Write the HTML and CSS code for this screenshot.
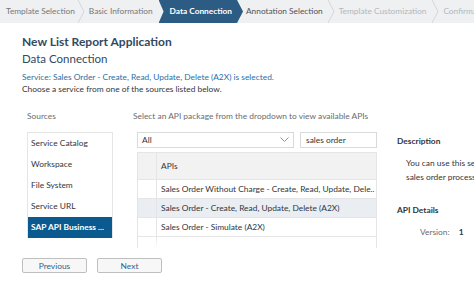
FILE: index.html
```html
<!DOCTYPE html>
<html>
<head>
<meta charset="utf-8">
<link rel="stylesheet" href="styles.css">
</head>
<body>
<nav class="crumbs">
  <div class="crumb first">Template Selection</div>
  <svg class="sep" width="8" height="23" viewBox="0 0 8 23"><path d="M1 0 L7 11.5 L1 23" fill="none" stroke="#d3d7db" stroke-width="1"/></svg>
  <div class="crumb second">Basic Information</div>
  <div class="crumb active">Data Connection</div>
  <div class="crumb next">Annotation Selection</div>
  <svg class="sep" width="8" height="23" viewBox="0 0 8 23"><path d="M1 0 L7 11.5 L1 23" fill="none" stroke="#d3d7db" stroke-width="1"/></svg>
  <div class="crumb disabled">Template Customization</div>
  <svg class="sep" width="8" height="23" viewBox="0 0 8 23"><path d="M1 0 L7 11.5 L1 23" fill="none" stroke="#d3d7db" stroke-width="1"/></svg>
  <div class="crumb disabled">Confirmation</div>
</nav>
<main class="content">
  <h1 class="title">New List Report Application</h1>
  <h2 class="subtitle">Data Connection</h2>
  <p class="info">Service: Sales Order - Create, Read, Update, Delete (A2X) is selected.</p>
  <p class="hint">Choose a service from one of the sources listed below.</p>
  <section class="panes">
    <div class="sources">
      <div class="label">Sources</div>
      <ul class="list">
        <li>Service Catalog</li>
        <li>Workspace</li>
        <li>File System</li>
        <li>Service URL</li>
        <li class="selected">SAP API Business ...</li>
      </ul>
    </div>
    <div class="apis">
      <div class="label">Select an API package from the dropdown to view available APIs</div>
      <div class="filters">
        <div class="select"><span>All</span>
          <svg width="9" height="6" viewBox="0 0 9 6"><path d="M0.5 0.5 L4.5 4.5 L8.5 0.5" fill="none" stroke="#8c9196" stroke-width="1"/></svg>
        </div>
        <div class="search">sales order</div>
      </div>
      <div class="table">
        <div class="row head"><div class="sel"></div><div class="cell">APIs</div></div>
        <div class="row"><div class="sel"></div><div class="cell">Sales Order Without Charge - Create, Read, Update, Dele..</div></div>
        <div class="row hl"><div class="sel"></div><div class="cell">Sales Order - Create, Read, Update, Delete (A2X)</div></div>
        <div class="row"><div class="sel"></div><div class="cell">Sales Order - Simulate (A2X)</div></div>
        <div class="row tail"><div class="sel"></div><div class="cell"></div></div>
        <div class="fade"></div>
      </div>
    </div>
    <div class="desc">
      <div class="dtitle">Description</div>
      <p class="dtext">You can use this service to create, read, update, and delete<br>sales order processes in your system.</p>
      <div class="dtitle api">API Details</div>
      <div class="version"><span class="vk">Version:</span><span class="vv">1</span></div>
    </div>
  </section>
  <footer class="buttons">
    <button class="btn">Previous</button>
    <button class="btn">Next</button>
  </footer>
</main>
</body>
</html>
```
FILE: styles.css
```css
* { box-sizing: border-box; }
html, body { margin: 0; padding: 0; }
body {
  width: 474px; height: 281px; overflow: hidden;
  font-family: "Lato", "Liberation Sans", sans-serif;
  color: #32363a;
  background: #fff;
}
.crumbs {
  display: flex; align-items: center;
  height: 23px; background: #eef0f2;
  white-space: nowrap; overflow: hidden;
  font-size: 8.3px;
}
.crumb { height: 23px; line-height: 23px; flex: none; }
.sep { flex: none; }
.crumb.first { color: #73787d; padding: 0 2px 0 6px; }
.crumb.second { color: #73787d; padding: 0 6px 0 4px; }
.crumb.active {
  background: #2c5b83; color: #fff; font-weight: 700;
  padding: 0 11px 0 11px;
  clip-path: polygon(0 0, calc(100% - 6px) 0, 100% 50%, calc(100% - 6px) 100%, 0 100%, 5px 50%);
}
.crumb.next { color: #4f5357; padding: 0 4px 0 3px; }
.crumb.disabled { color: #b2b8be; padding: 0 5px 0 4px; }

.content { padding: 10px 0 0 22px; }
.title { margin: 0; font-size: 12px; font-weight: 700; color: #304a62; line-height: 17px; }
.subtitle { margin: 0; font-size: 11.5px; font-weight: 400; color: #304a62; line-height: 17px; }
.info { margin: 4px 0 0; font-size: 8.4px; color: #2d6fa5; line-height: 12px; }
.hint { margin: 0; font-size: 8.4px; color: #32363a; line-height: 12px; }

.panes { display: flex; margin-top: 15px; padding-left: 5px; }
.label { font-size: 8.4px; color: #6a6d70; line-height: 12px; height: 22px; white-space: nowrap; }
.sources { width: 106px; flex: none; }
.list {
  list-style: none; margin: 0; padding: 0; width: 86px;
  border: 1px solid #e5e5e5; border-bottom: none;
}
.list li {
  height: 21px; line-height: 21px; padding-left: 3px;
  font-size: 8.4px; color: #32363a; white-space: nowrap;
}
.list li.selected { background: #0b5a8f; color: #fff; font-weight: 700; }

.apis { width: 245px; flex: none; }
.filters { display: flex; gap: 6px; margin-left: 4px; }
.select {
  width: 157px; height: 16px; border: 1px solid #d9d9d9;
  display: flex; align-items: center; justify-content: space-between;
  padding: 0 4px; font-size: 8.4px;
}
.search {
  width: 77px; height: 16px; border: 1px solid #d9d9d9;
  font-size: 8.4px; line-height: 14px; padding-left: 5px;
}
.table { position: relative; margin-left: 4px; margin-top: 4px; width: 240px; border-left: 1px solid #e5e5e5; border-right: 1px solid #e5e5e5; }
.row { display: flex; height: 19px; border-bottom: 1px solid #e5e5e5; }
.row.head { height: 28px; background: #f2f2f2; border-top: 1px solid #e5e5e5; }
.row.hl { background: #eaeef2; }
.row.tail { height: 11px; border-bottom: none; }
.sel { width: 19px; flex: none; border-right: 1px solid #e5e5e5; }
.cell { padding-left: 4px; font-size: 8.4px; line-height: 18px; color: #32363a; white-space: nowrap; overflow: hidden; }
.row.head .cell { line-height: 27px; }
.fade { position: absolute; left: 0; right: 0; bottom: 0; height: 12px; background: linear-gradient(rgba(255,255,255,0), #fff); }

.desc { padding-left: 19px; padding-top: 25px; white-space: nowrap; }
.dtitle { font-size: 8.4px; font-weight: 700; color: #32363a; line-height: 12px; }
.dtext { margin: 9px 0 0 9px; font-size: 8.4px; line-height: 14px; color: #32363a; }
.dtitle.api { margin-top: 20px; }
.version { margin-top: 10px; padding-left: 23px; font-size: 8.4px; line-height: 12px; }
.vk { color: #6a6d70; }
.vv { margin-left: 9px; font-weight: 700; }

.buttons { display: flex; gap: 10px; margin-top: 10px; }
.btn {
  width: 65px; height: 15px; padding: 0;
  background: #f7f7f7; border: 1px solid #bfbfbf; border-radius: 2px;
  font-family: inherit; font-size: 8.4px; color: #346187;
}
```
